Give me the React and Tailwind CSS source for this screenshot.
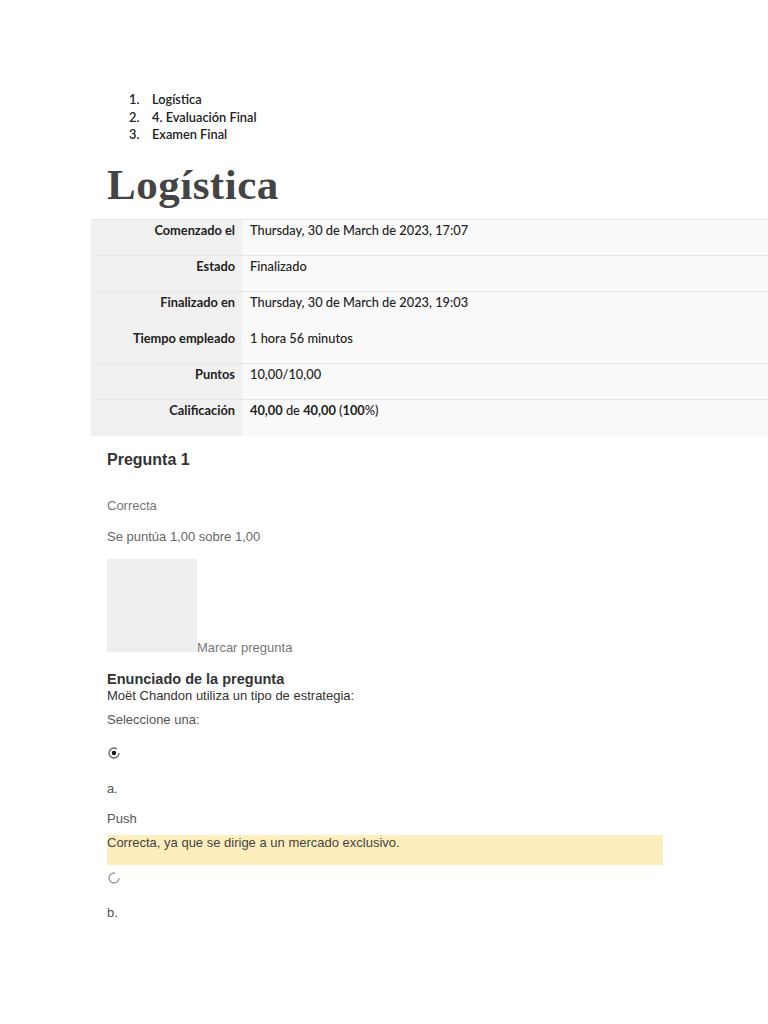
import React from "react";

const rows = [
  ["Comenzado el", "Thursday, 30 de March de 2023, 17:07", true],
  ["Estado", "Finalizado", true],
  ["Finalizado en", "Thursday, 30 de March de 2023, 19:03", false],
  ["Tiempo empleado", "1 hora 56 minutos", true],
  ["Puntos", "10,00/10,00", true],
  ["Calificación", <span><b>40,00</b> de <b>40,00</b> (<b>100</b>%)</span>, false],
];

const crumbs = ["Logística", "4. Evaluación Final", "Examen Final"];

function Radio({ checked }) {
  return (
    <div className="w-[20px] h-[20px] flex items-center justify-center">
      <svg width="14" height="14" viewBox="0 0 14 14">
        <circle cx="7" cy="7" r="5" fill="#fff" stroke={checked ? "#666" : "#999"} strokeWidth="1.3" strokeDasharray={checked ? "26 5" : "24 8"} />
        {checked && <circle cx="7" cy="7" r="2.2" fill="#111" />}
      </svg>
    </div>
  );
}

export default function App() {
  return (
    <div className="w-[768px] h-[1024px] bg-white overflow-hidden" style={{ fontFamily: "'Liberation Sans', Arial, sans-serif" }}>
      <ol className="pt-[91px] pl-[129px] text-[12.8px] leading-[17.5px] text-[#222] font-semibold" style={{ fontFamily: "Lato, sans-serif" }}>
        {crumbs.map((c, i) => (
          <li key={i} className="flex">
            <span className="w-[23px]">{i + 1}.</span>
            <span>{c}</span>
          </li>
        ))}
      </ol>
      <h1 className="ml-[107px] mt-[15px] text-[43px] leading-[52px] font-bold text-[#444] tracking-[0.5px]" style={{ fontFamily: "'Liberation Serif', 'Times New Roman', serif" }}>
        Logística
      </h1>
      <div className="ml-[91px] mt-[8px] border-t border-[#e6e6e6] text-[12.8px] text-[#222]" style={{ fontFamily: "Lato, sans-serif" }}>
        {rows.map(([k, v, border], i) => (
          <div key={i} className={`flex h-[36px] ${border ? "border-b border-[#e6e6e6]" : ""}`}>
            <div className="w-[151px] bg-[#f0f0f0] text-right pr-[7px] pt-[1px] font-bold">{k}</div>
            <div className="flex-1 bg-[#f9f9f9] pl-[8px] pt-[1px] font-medium">{v}</div>
          </div>
        ))}
      </div>
      <div className="ml-[107px] mt-[14px] text-[16px] leading-[20px] font-bold text-[#333]">Pregunta 1</div>
      <div className="ml-[107px] mt-[28px] text-[13px] leading-[16px] text-[#777]">Correcta</div>
      <div className="ml-[107px] mt-[15px] text-[13px] leading-[16px] text-[#666]">Se puntúa 1,00 sobre 1,00</div>
      <div className="ml-[107px] mt-[14px] flex items-end">
        <div className="w-[90px] h-[93px] bg-[#eeeeee]" />
        <span className="text-[13px] leading-[15px] text-[#777] mb-[-3px]">Marcar pregunta</span>
      </div>
      <div className="ml-[107px] mt-[19px] text-[14.5px] leading-[16px] font-bold text-[#333]">Enunciado de la pregunta</div>
      <div className="ml-[107px] mt-[1px] text-[13px] leading-[16px] text-[#333]">Moët Chandon utiliza un tipo de estrategia:</div>
      <div className="ml-[107px] mt-[8px] text-[13px] leading-[16px] text-[#555]">Seleccione una:</div>
      <div className="ml-[104px] mt-[13px] w-[28px] h-[24px] flex items-center">
        <Radio checked />
      </div>
      <div className="ml-[107px] mt-[16px] text-[13px] leading-[16px] text-[#555]">a.</div>
      <div className="ml-[107px] mt-[14px] text-[13px] leading-[16px] text-[#555]">Push</div>
      <div className="ml-[107px] mt-[8px] w-[556px] h-[30px] bg-[#fcefbd] text-[13px] leading-[16px] text-[#444]">
        Correcta, ya que se dirige a un mercado exclusivo.
      </div>
      <div className="ml-[104px] mt-[1px] w-[28px] h-[24px] flex items-center">
        <Radio />
      </div>
      <div className="ml-[107px] mt-[15px] text-[13px] leading-[16px] text-[#555]">b.</div>
    </div>
  );
}
